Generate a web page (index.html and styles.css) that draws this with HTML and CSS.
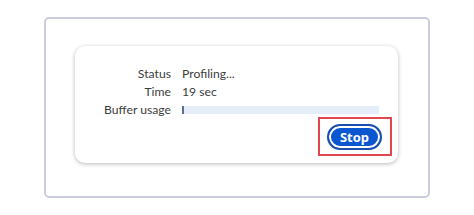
FILE: index.html
```html
<!DOCTYPE html>
<html lang="en">

<head>
    <meta charset="UTF-8">
    <meta name="viewport" content="width=device-width, initial-scale=1.0">
    <title>Profiler</title>
    <link rel="stylesheet" href="styles.css">
</head>

<body>
    <div class="Frame">
        <div class="Card">
            <div class="InfoGrid">
                <span class="Label">Status</span>
                <span class="Value">Profiling...</span>
                <span class="Label">Time</span>
                <span class="Value">19 sec</span>
                <span class="Label">Buffer usage</span>
                <div class="Bar">
                    <div class="BarFill" style="width: 2px;"></div>
                </div>
            </div>
            <div class="BtnRow">
                <button class="StopBtn">Stop</button>
            </div>
            <div class="Highlight"></div>
        </div>
    </div>
</body>

</html>
```

FILE: styles.css
```css
body {
    margin: 0;
    background-color: #fff;
    font-family: "Lato", "Noto Sans", sans-serif;
    color: #3d3d3d;
}

.Frame {
    margin-left: 44px;
    margin-top: 17px;
    border: 2px solid #cbcce0;
    border-radius: 5px;
    padding: 27px 0 0 29px;
    box-sizing: content-box;
    width: 353px;
    height: 150px;
}

.Card {
    width: 323px;
    height: 117px;
    border-radius: 10px;
    background-color: #fff;
    box-shadow: 0 1px 4px rgba(0, 0, 0, 0.28);
    position: relative;
    box-sizing: border-box;
    padding-top: 19px;
}

.InfoGrid {
    display: grid;
    grid-template-columns: 96px 197px;
    column-gap: 11px;
    row-gap: 1px;
    align-items: center;
    font-size: 12.2px;
    line-height: 17px;
}

.Label {
    text-align: right;
}

.Bar {
    height: 8px;
    background-color: #e5edf8;
    position: relative;
}

.BarFill {
    height: 100%;
    background-color: #5a6f91;
}

.BtnRow {
    display: flex;
    justify-content: flex-end;
    padding-right: 16px;
    margin-top: 6px;
}

.StopBtn {
    width: 55px;
    height: 26px;
    border: 2px solid #1a4fb0;
    border-radius: 13px;
    background-color: #0b57d0;
    box-shadow: inset 0 0 0 2px #fff;
    color: #fff;
    font-family: "Noto Sans", "Open Sans", sans-serif;
    font-weight: bold;
    font-size: 13px;
    padding: 0;
    cursor: pointer;
}

.Highlight {
    position: absolute;
    left: 243px;
    top: 71px;
    width: 74px;
    height: 39px;
    border: 2px solid #e2474f;
    box-sizing: border-box;
    pointer-events: none;
}
```
